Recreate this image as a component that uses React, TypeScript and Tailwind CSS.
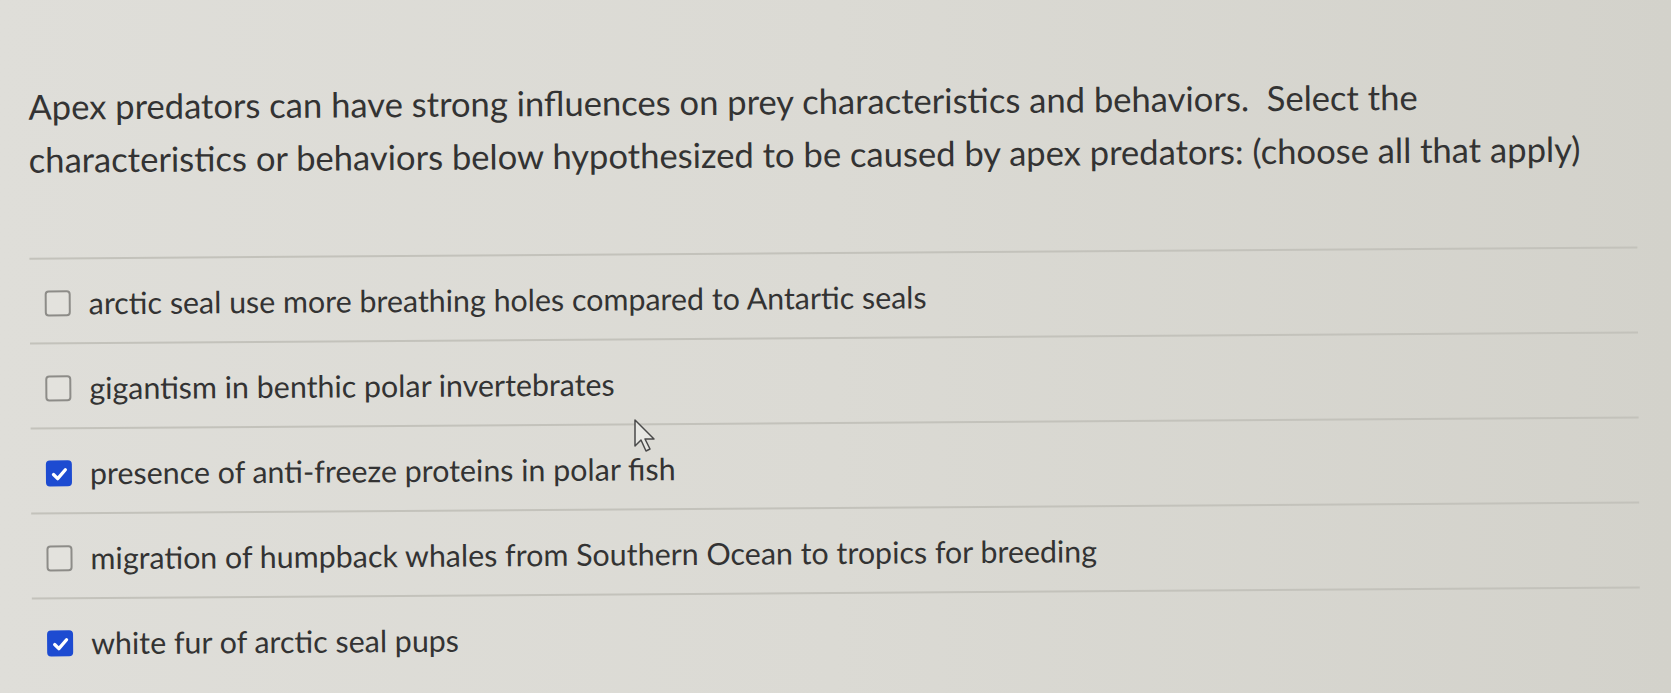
import React from "react";

const options = [
  { label: "arctic seal use more breathing holes compared to Antartic seals", checked: false },
  { label: "gigantism in benthic polar invertebrates", checked: false },
  { label: "presence of anti-freeze proteins in polar fish", checked: true },
  { label: "migration of humpback whales from Southern Ocean to tropics for breeding", checked: false },
  { label: "white fur of arctic seal pups", checked: true },
];

function Box({ checked }: { checked: boolean }) {
  if (checked) {
    return (
      <div className="w-[26px] h-[26px] rounded-[4px] bg-[#1d4bd1] flex items-center justify-center shrink-0">
        <svg width="19" height="19" viewBox="0 0 16 16">
          <path d="M3 8.5 L6.5 12 L13 4.5" fill="none" stroke="#ffffff" strokeWidth="2.8" strokeLinecap="round" strokeLinejoin="round" />
        </svg>
      </div>
    );
  }
  return <div className="w-[26px] h-[26px] rounded-[4px] border-2 border-[#8d8c88] bg-[#e3e2dd] shrink-0" />;
}

export default function App() {
  return (
    <div
      className="relative w-[1671px] h-[693px] overflow-hidden bg-gradient-to-r from-[#dfded9] via-[#dbdad4] to-[#d3d2cb] text-[#333333]"
      style={{ fontFamily: "Lato, 'Open Sans', sans-serif" }}
    >
      <div className="pl-[30px] pr-[33px] pt-[74px] rotate-[-0.4deg]">
        <p className="text-[34.6px] leading-[53px]">
          Apex predators can have strong influences on prey characteristics and behaviors.&nbsp; Select the
          <br />
          characteristics or behaviors below hypothesized to be caused by apex predators: (choose all that apply)
        </p>
        <div className="mt-[72px]">
          {options.map((o, i) => (
            <div key={i} className="h-[85px] border-t-2 border-[#c3c2bb] flex items-center pl-[15px] gap-[18px] pt-[5px]">
              <Box checked={o.checked} />
              <span className="text-[30.4px]">{o.label}</span>
            </div>
          ))}
        </div>
      </div>
      <svg className="absolute left-[633px] top-[418px]" width="30" height="38" viewBox="0 0 30 38">
        <path d="M2 2 L2 28 L8 22 L13 33 L17 31 L12 21 L21 21 Z" fill="#e8e8e4" stroke="#4a4a4a" strokeWidth="1.5" strokeLinejoin="round" />
      </svg>
    </div>
  );
}
